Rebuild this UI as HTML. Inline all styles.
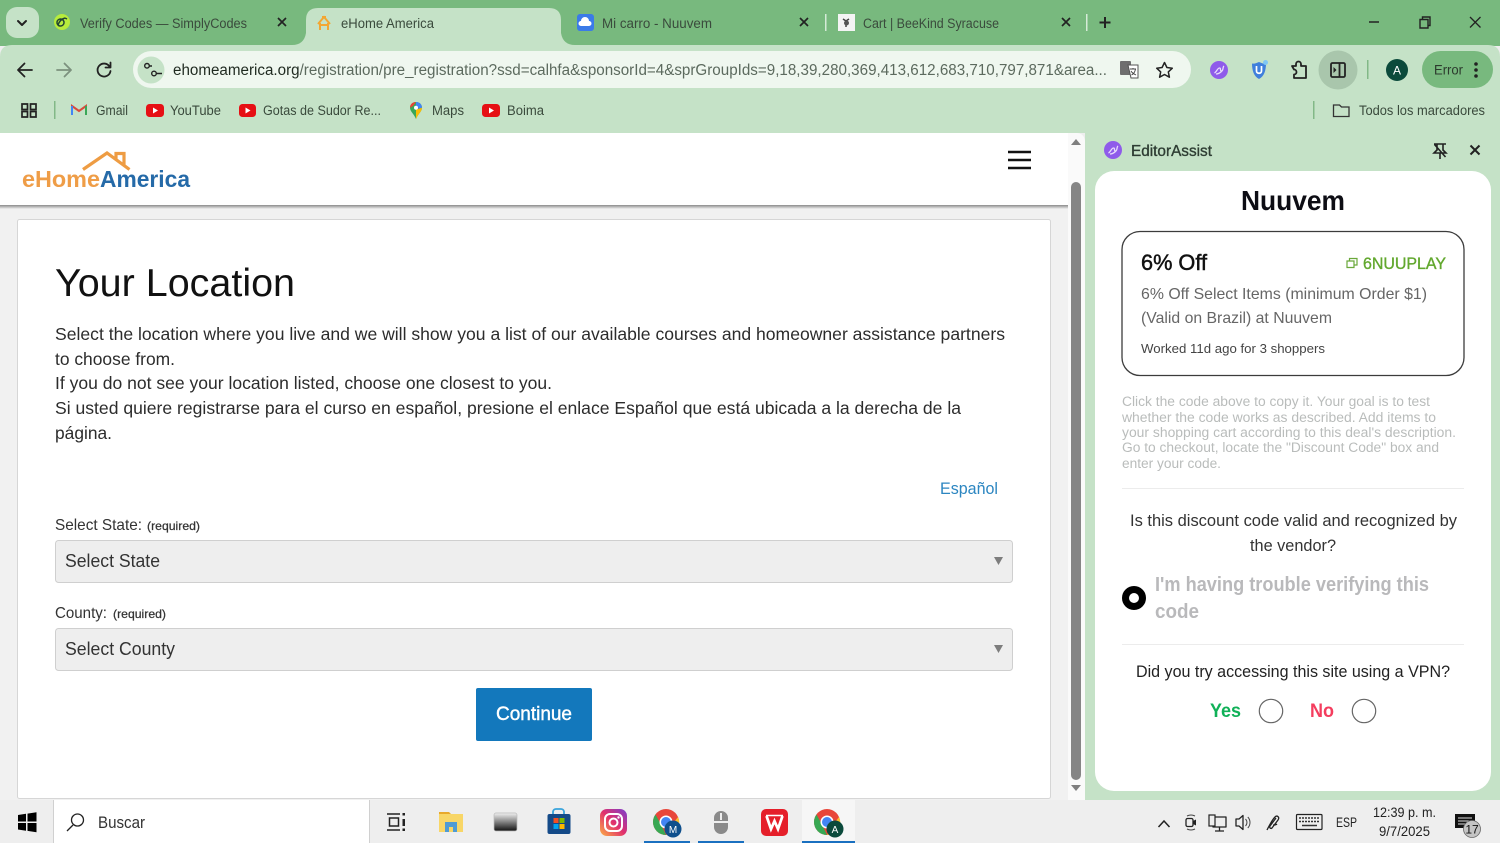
<!DOCTYPE html>
<html lang="es"><head><meta charset="utf-8"><title>eHome America</title>
<style>
html,body{margin:0;padding:0;width:1500px;height:843px;overflow:hidden;background:#eee}
svg{position:absolute;left:0;top:0;display:block}
text{font-family:"Liberation Sans",sans-serif;white-space:pre}
.c{font-size:13.5px;fill:#3a4a3c}
.p{font-size:17.6px;fill:#2c2c2c}
.h{font-size:13.4px;fill:#b9bcbb}
.i{fill:none;stroke:#222;stroke-width:1.8;stroke-linecap:round;stroke-linejoin:round}
.t{fill:none;stroke:#222;stroke-width:1.3;stroke-linejoin:round}
</style></head><body>
<svg width="1500" height="843" viewBox="0 0 1500 843" xmlns="http://www.w3.org/2000/svg">
<!-- chrome backgrounds -->
<rect width="1500" height="843" fill="#eeeeee"/>
<rect width="1500" height="46" fill="#78b97e"/>
<path d="M0 133V57Q0 45 12 45H1488Q1500 45 1500 57V133Z" fill="#c5e2c7"/>
<!-- tabs -->
<rect x="6" y="7" width="33" height="31" rx="11" fill="#c5e2c7"/>
<path d="M18 21l4 4 4-4" fill="none" stroke="#222" stroke-width="2" stroke-linecap="round" stroke-linejoin="round"/>
<circle cx="62" cy="22" r="8" fill="#b7ec3c"/>
<path d="M58 25c1-3 3-6 7-7M57 22a3.500 3.500 0 1 0 7 1 3.500 3.500 0 1 0-7-1M65 18l2 1" fill="none" stroke="#243" stroke-width="1.500"/>
<text class="c" x="80" y="28" textLength="167" lengthAdjust="spacingAndGlyphs">Verify Codes — SimplyCodes</text>
<path d="M278 18l8 8M286 18l-8 8M539 18l8 8M547 18l-8 8M800 18l8 8M808 18l-8 8M1062 18l8 8M1070 18l-8 8" fill="none" stroke="#222" stroke-width="1.700"/>
<path d="M292 45Q304 45 306 33V20Q306 8 318 8H549Q561 8 561 20V33Q563 45 575 45Z" fill="#c5e2c7"/>
<path d="M318 24l6-7 6 7M320 23v7M328 23v7M320 25h8M322 17h4" fill="none" stroke="#f3a732" stroke-width="2"/>
<text class="c" x="341" y="28" textLength="93" lengthAdjust="spacingAndGlyphs">eHome America</text>
<rect x="577" y="14" width="17" height="17" rx="3" fill="#3b7be8"/>
<path d="M581 26a2.500 2.500 0 0 1 0-5 4 4 0 0 1 8 0 2.500 2.500 0 0 1 0 5Z" fill="#fff"/>
<text class="c" x="602" y="28" textLength="110" lengthAdjust="spacingAndGlyphs">Mi carro - Nuuvem</text>
<rect x="825" y="14" width="1.500" height="17" fill="#d5ead7"/>
<rect x="838" y="14" width="17" height="17" fill="#f4f4f4"/>
<path d="M843 19l3 2 3-2M846 21v6" fill="none" stroke="#444" stroke-width="1.500"/><circle cx="846.500" cy="23" r="2.500" fill="#555"/>
<text class="c" x="863" y="28" textLength="136" lengthAdjust="spacingAndGlyphs">Cart | BeeKind Syracuse</text>
<rect x="1086" y="14" width="1.500" height="17" fill="#d5ead7"/>
<path d="M1105 17v11M1099.500 22.500h11" fill="none" stroke="#222" stroke-width="2"/>
<path d="M1369 22h10" stroke="#222" stroke-width="1.500"/>
<path d="M1420 19.500h8v8.500h-8zM1422.500 19.500v-2.500h7.500v8.500h-2" fill="none" stroke="#222" stroke-width="1.400"/>
<path d="M1470 17l10.500 10.500M1480.500 17l-10.500 10.500" stroke="#222" stroke-width="1.300"/>
<!-- toolbar -->
<path class="i" d="M32 70H18M24.500 63.500L18 70l6.500 6.500"/>
<path class="i" style="stroke:#7c917e" d="M57 70h14M64.500 63.500L71 70l-6.500 6.500"/>
<path class="i" d="M109.500 66.500A6.500 6.500 0 1 0 110.500 71M110.500 62.500v5h-5"/>
<rect x="133" y="51" width="1058" height="37" rx="18.500" fill="#eff7ef"/>
<circle cx="151" cy="70" r="13.500" fill="#c5e2c7"/>
<path d="M145 66h7M155 73.500h7" stroke="#222" stroke-width="1.500"/>
<circle cx="147" cy="65.800" r="2.300" fill="#c5e2c7" stroke="#222" stroke-width="1.400"/><circle cx="154" cy="73.500" r="2.300" fill="#c5e2c7" stroke="#222" stroke-width="1.400"/>
<text x="173" y="75" font-size="15.500" textLength="934" lengthAdjust="spacingAndGlyphs" fill="#5c6a5e"><tspan fill="#1f2a20">ehomeamerica.org</tspan>/registration/pre_registration?ssd=calhfa&amp;sponsorId=4&amp;sprGroupIds=9,18,39,280,369,413,612,683,710,797,871&amp;area...</text>
<rect x="1120" y="61" width="11" height="14" rx="1" fill="#6e6e6e"/>
<path d="M1128 65h10v13h-7z" fill="#fff" stroke="#555" stroke-width="1"/>
<path d="M1130 69h6M1133 68v1M1135.500 69c-.5 3-2 5-4 6M1131 71c1 2 3 3 5 4" fill="none" stroke="#444" stroke-width=".9"/>
<path d="M1164.500 62.500l2.400 5 5.400.7-4 3.700 1.100 5.300-4.900-2.700-4.900 2.700 1.100-5.300-4-3.700 5.400-.7z" fill="none" stroke="#222" stroke-width="1.500" stroke-linejoin="round"/>
<circle cx="1219" cy="70" r="9" fill="#8f5bea"/>
<path d="M1214.500 73c2-1 3-5 5-5s0 3 2 3 1-4 2.500-5M1216 74c2 0 4-1 6-3" fill="none" stroke="#e8dcfb" stroke-width="1.300"/>
<path d="M1252 63.500c3 .5 5-.7 7-1.500 2 .8 4 2 7 1.500 0 7-2 13-7 15.500-5-2.500-7-8.500-7-15.500Z" fill="#3f7fdc"/>
<path d="M1256.500 66v5c0 3 5 3 5 0v-5" fill="none" stroke="#fff" stroke-width="1.700"/>
<circle cx="1265.500" cy="62.500" r="2.500" fill="#7fc6f3"/>
<path class="i" d="M1292 66h4v-2a2.500 2.500 0 0 1 5 0v2h5v12h-12v-3.500a2.500 2.500 0 0 0 0-5z" style="stroke-width:1.800"/>
<circle cx="1338" cy="70" r="19.500" fill="#a9c6ac"/>
<rect x="1331" y="63" width="14" height="14" rx="1.500" fill="none" stroke="#222" stroke-width="1.800"/>
<path d="M1339.500 63v14" stroke="#222" stroke-width="1.800"/><path d="M1333.500 67l3 3-3 3z" fill="#222"/>
<rect x="1367" y="60" width="1.500" height="19" fill="#82b887"/>
<circle cx="1397" cy="70" r="11" fill="#0b4a3b"/>
<text x="1397" y="74.500" font-size="12" fill="#fff" text-anchor="middle">A</text>
<rect x="1422" y="51" width="71" height="37" rx="18.500" fill="#78b97e"/>
<text class="c" x="1434" y="74.500" textLength="29" lengthAdjust="spacingAndGlyphs" style="fill:#2c3a2d">Error</text>
<circle cx="1476" cy="64" r="1.800" fill="#222"/><circle cx="1476" cy="70" r="1.800" fill="#222"/><circle cx="1476" cy="76" r="1.800" fill="#222"/>
<!-- bookmarks -->
<path d="M22 104h5.500v5.500H22zM30.500 104H36v5.500h-5.500zM22 111.500h5.500V117H22zM30.500 111.500H36V117h-5.500z" fill="none" stroke="#222" stroke-width="1.700"/>
<rect x="54" y="101" width="1.500" height="18" fill="#82b887"/>
<path d="M72 115v-9l7 5 7-5v9" fill="none" stroke="#d94a3d" stroke-width="2"/>
<path d="M72 115v-9" stroke="#4285f4" stroke-width="2"/><path d="M86 115v-9" stroke="#3aa757" stroke-width="2"/>
<text class="c" x="96" y="115" textLength="32" lengthAdjust="spacingAndGlyphs">Gmail</text>
<rect x="146" y="104" width="18" height="13" rx="3.500" fill="#e60f14"/><path d="M153 107.500l5 3-5 3z" fill="#fff"/>
<text class="c" x="170" y="115" textLength="51" lengthAdjust="spacingAndGlyphs">YouTube</text>
<rect x="239" y="104" width="17" height="13" rx="3.500" fill="#e60f14"/><path d="M245.500 107.500l5 3-5 3z" fill="#fff"/>
<text class="c" x="263" y="115" textLength="118" lengthAdjust="spacingAndGlyphs">Gotas de Sudor Re...</text>
<path d="M416 102c-3.800 0-6 2.700-6 5.700 0 3.800 4 6 6 11.300 2-5.300 6-7.500 6-11.300 0-3-2.200-5.700-6-5.700z" fill="#3aa757"/>
<path d="M416 102c3.800 0 6 2.700 6 5.700l-6 1.500z" fill="#4285f4"/><path d="M410 107.700c0-3 2.200-5.700 6-5.700l-3 4z" fill="#ea4335"/><path d="M416 119c2-5.300 6-7.500 6-11.300l-6 2z" fill="#fbbc04"/><circle cx="416" cy="107.700" r="2" fill="#fff"/>
<text class="c" x="432" y="115" textLength="32" lengthAdjust="spacingAndGlyphs">Maps</text>
<rect x="482" y="104" width="18" height="13" rx="3.500" fill="#e60f14"/><path d="M489 107.500l5 3-5 3z" fill="#fff"/>
<text class="c" x="507" y="115" textLength="37" lengthAdjust="spacingAndGlyphs">Boima</text>
<rect x="1313" y="101" width="1.500" height="18" fill="#82b887"/>
<path d="M1333.500 105h6l2 2h7.500v9.500h-15.500z" fill="none" stroke="#333" stroke-width="1.300"/>
<text class="c" x="1359" y="115" textLength="126" lengthAdjust="spacingAndGlyphs">Todos los marcadores</text>

<!-- page -->
<path d="M0 133H1076Q1084 133 1085 141V800H0Z" fill="#f1f1f1"/>
<defs><linearGradient id="sh" x1="0" y1="0" x2="0" y2="1"><stop offset="0" stop-color="#8a8a8a"/><stop offset="1" stop-color="#f1f1f1"/></linearGradient></defs>
<rect x="0" y="205" width="1068" height="4" fill="url(#sh)"/>
<path d="M0 133H1068V205H0Z" fill="#fff"/>
<path d="M1068 133H1076Q1084 133 1085 141V800H1068Z" fill="#fafafa"/>
<path d="M1076 139l5 6h-10z" fill="#7f7f7f"/>
<rect x="1071" y="182" width="10" height="598" rx="5" fill="#858585"/>
<path d="M1071 785h10l-5 6z" fill="#7f7f7f"/>
<!-- logo -->
<path d="M83 169.500L107 153 129.500 169.500M116 160V153.500H124V166" fill="none" stroke="#ee9c43" stroke-width="3.200"/>
<text x="22" y="187" font-size="23" font-weight="700" textLength="78" lengthAdjust="spacingAndGlyphs" fill="#ef9d47">eHome</text>
<text x="100" y="187" font-size="23" font-weight="700" textLength="90" lengthAdjust="spacingAndGlyphs" fill="#256aa8">America</text>
<path d="M1008 152h23M1008 160h23M1008 168h23" stroke="#111" stroke-width="2.600"/>
<!-- main card -->
<rect x="17.500" y="219.500" width="1033" height="579" rx="2" fill="#fff" stroke="#d6d6d6"/>
<text x="55" y="296" font-size="38.500" textLength="240" lengthAdjust="spacingAndGlyphs" fill="#111">Your Location</text>
<text class="p" x="55" y="340" textLength="950" lengthAdjust="spacingAndGlyphs">Select the location where you live and we will show you a list of our available courses and homeowner assistance partners</text>
<text class="p" x="55" y="365" textLength="120" lengthAdjust="spacingAndGlyphs">to choose from.</text>
<text class="p" x="55" y="389" textLength="497" lengthAdjust="spacingAndGlyphs">If you do not see your location listed, choose one closest to you.</text>
<text class="p" x="55" y="414" textLength="906" lengthAdjust="spacingAndGlyphs">Si usted quiere registrarse para el curso en español, presione el enlace Español que está ubicada a la derecha de la</text>
<text class="p" x="55" y="439" textLength="57" lengthAdjust="spacingAndGlyphs">página.</text>
<text x="940" y="494" font-size="16.500" textLength="58" lengthAdjust="spacingAndGlyphs" fill="#2c86c1">Español</text>
<text x="55" y="530" font-size="16" textLength="87" lengthAdjust="spacingAndGlyphs" fill="#333">Select State:</text>
<text x="147" y="530" font-size="12" textLength="53" lengthAdjust="spacingAndGlyphs" fill="#333" stroke="#333" stroke-width=".25">(required)</text>
<rect x="55.500" y="540.500" width="957" height="42" rx="3" fill="#eeeeee" stroke="#cfcfcf"/>
<text x="65" y="567" font-size="18.500" textLength="95" lengthAdjust="spacingAndGlyphs" fill="#333">Select State</text>
<path d="M994 557h9l-4.500 8z" fill="#7d7d7d"/>
<text x="55" y="618" font-size="16" textLength="52" lengthAdjust="spacingAndGlyphs" fill="#333">County:</text>
<text x="113" y="618" font-size="12" textLength="53" lengthAdjust="spacingAndGlyphs" fill="#333" stroke="#333" stroke-width=".25">(required)</text>
<rect x="55.500" y="628.500" width="957" height="42" rx="3" fill="#eeeeee" stroke="#cfcfcf"/>
<text x="65" y="655" font-size="18.500" textLength="110" lengthAdjust="spacingAndGlyphs" fill="#333">Select County</text>
<path d="M994 645h9l-4.500 8z" fill="#7d7d7d"/>
<rect x="476" y="688" width="116" height="53" rx="2" fill="#1378bc"/>
<text x="496" y="720" font-size="19" textLength="76" lengthAdjust="spacingAndGlyphs" fill="#fff" stroke="#fff" stroke-width=".4">Continue</text>

<!-- side panel -->
<rect x="1085" y="133" width="415" height="667" fill="#c5e2c7"/>
<circle cx="1113" cy="150" r="9" fill="#8f5bea"/>
<path d="M1108.500 153c2-1 3-5 5-5s0 3 2 3 1-4 2.500-5M1110 154c2 0 4-1 6-3" fill="none" stroke="#e8dcfb" stroke-width="1.300"/>
<text x="1131" y="156" font-size="15.500" textLength="81" lengthAdjust="spacingAndGlyphs" fill="#2e3d33" stroke="#2e3d33" stroke-width=".35">EditorAssist</text>
<path d="M1434 144h12M1437 144v6l-3 3h12l-3-3v-6M1440 153v6M1434.500 144.500l11 12.500" fill="none" stroke="#222" stroke-width="1.600"/>
<path d="M1470.500 145.500l9 9M1479.500 145.500l-9 9" stroke="#222" stroke-width="2"/>
<rect x="1095" y="171" width="396" height="620" rx="19" fill="#fff"/>
<text x="1293" y="210" font-size="28" font-weight="700" text-anchor="middle" textLength="104" lengthAdjust="spacingAndGlyphs" fill="#0d0d14">Nuuvem</text>
<rect x="1122" y="231.500" width="342" height="144" rx="18" fill="#fff" stroke="#3c3c3c" stroke-width="1.300"/>
<text x="1141" y="270" font-size="22" textLength="66" lengthAdjust="spacingAndGlyphs" fill="#111" stroke="#111" stroke-width=".5">6% Off</text>
<path d="M1347 261h7v6.500h-7zM1349.500 261v-2.500h7.500v6.500h-3" fill="none" stroke="#6aa83a" stroke-width="1.200"/>
<text x="1363" y="269" font-size="16.500" textLength="83" lengthAdjust="spacingAndGlyphs" fill="#62a82e" stroke="#62a82e" stroke-width=".35">6NUUPLAY</text>
<text x="1141" y="299" font-size="16" textLength="286" lengthAdjust="spacingAndGlyphs" fill="#666">6% Off Select Items (minimum Order $1)</text>
<text x="1141" y="323" font-size="16" textLength="191" lengthAdjust="spacingAndGlyphs" fill="#666">(Valid on Brazil) at Nuuvem</text>
<text x="1141" y="353" font-size="13" textLength="184" lengthAdjust="spacingAndGlyphs" fill="#444">Worked 11d ago for 3 shoppers</text>
<text class="h" x="1122" y="406" textLength="308" lengthAdjust="spacingAndGlyphs">Click the code above to copy it. Your goal is to test</text>
<text class="h" x="1122" y="422" textLength="314" lengthAdjust="spacingAndGlyphs">whether the code works as described. Add items to</text>
<text class="h" x="1122" y="437" textLength="334" lengthAdjust="spacingAndGlyphs">your shopping cart according to this deal's description.</text>
<text class="h" x="1122" y="452" textLength="317" lengthAdjust="spacingAndGlyphs">Go to checkout, locate the "Discount Code" box and</text>
<text class="h" x="1122" y="468" textLength="99" lengthAdjust="spacingAndGlyphs">enter your code.</text>
<rect x="1122" y="488" width="342" height="1" fill="#ececec"/>
<text x="1130" y="526" font-size="16.200" textLength="327" lengthAdjust="spacingAndGlyphs" fill="#333">Is this discount code valid and recognized by</text>
<text x="1250" y="551" font-size="16.200" textLength="86" lengthAdjust="spacingAndGlyphs" fill="#333">the vendor?</text>
<circle cx="1134" cy="598" r="8.500" fill="#fff" stroke="#000" stroke-width="7"/>
<text x="1155" y="591" font-size="20" font-weight="700" textLength="274" lengthAdjust="spacingAndGlyphs" fill="#b9b9bb">I'm having trouble verifying this</text>
<text x="1155" y="618" font-size="20" font-weight="700" textLength="44" lengthAdjust="spacingAndGlyphs" fill="#b9b9bb">code</text>
<rect x="1122" y="644" width="342" height="1" fill="#ececec"/>
<text x="1136" y="677" font-size="16.200" textLength="314" lengthAdjust="spacingAndGlyphs" fill="#222">Did you try accessing this site using a VPN?</text>
<text x="1210" y="717" font-size="19" font-weight="700" textLength="31" lengthAdjust="spacingAndGlyphs" fill="#10b158">Yes</text>
<circle cx="1271" cy="711" r="11.700" fill="#fff" stroke="#666" stroke-width="1.200"/>
<text x="1310" y="717" font-size="19" font-weight="700" textLength="24" lengthAdjust="spacingAndGlyphs" fill="#f43d5e">No</text>
<circle cx="1364" cy="711" r="11.700" fill="#fff" stroke="#666" stroke-width="1.200"/>

<!-- taskbar -->
<rect x="0" y="800" width="1500" height="43" fill="#eeeeee"/>
<path d="M18 815l8-1.200v7.700h-8zM27.500 813.600l9-1.300v9.200h-9zM18 823h8v7.700l-8-1.200zM27.500 823h9v9.200l-9-1.300z" fill="#000"/>
<rect x="54" y="800" width="315" height="43" fill="#fff"/><rect x="369" y="800" width="1" height="43" fill="#d0d0d0"/><rect x="53" y="800" width="1" height="43" fill="#d0d0d0"/>
<circle cx="77.500" cy="820" r="6" fill="none" stroke="#222" stroke-width="1.300"/><path d="M73 825l-6 6" stroke="#222" stroke-width="1.300"/>
<text x="98" y="828" font-size="16.500" textLength="47" lengthAdjust="spacingAndGlyphs" fill="#333">Buscar</text>
<path d="M387 814h13M389.500 818h9v8h-9zM387 830h13" fill="none" stroke="#222" stroke-width="1.500"/>
<rect x="402.500" y="813" width="2.500" height="2.500" fill="#222"/><rect x="402.500" y="819" width="2.500" height="7" fill="#222"/><rect x="402.500" y="828.500" width="2.500" height="2.500" fill="#222"/>
<path d="M439 812h10l3 3h-13z" fill="#e8a92c"/><rect x="439" y="814" width="24" height="18" fill="#f8d667"/>
<rect x="445" y="822" width="12" height="10" fill="#4f9bd4"/><rect x="449" y="827" width="4" height="5" fill="#f8d667"/>
<defs><linearGradient id="bk" x1="0" y1="0" x2="0" y2="1"><stop offset="0" stop-color="#f2f2f2"/><stop offset="1" stop-color="#111"/></linearGradient>
<linearGradient id="ig" x1="0" y1="1" x2="1" y2="0"><stop offset="0" stop-color="#fcb045"/><stop offset=".5" stop-color="#e1306c"/><stop offset="1" stop-color="#7a3fd0"/></linearGradient></defs>
<rect x="494" y="813" width="23" height="18" rx="2" fill="url(#bk)" stroke="#bbb" stroke-width=".7"/>
<path d="M553 814v-2.500a3 3 0 0 1 3-2.500h5a3 3 0 0 1 3 2.500v2.500" fill="none" stroke="#38a4dc" stroke-width="1.800"/>
<rect x="547.500" y="814" width="23" height="20" rx="2" fill="#144a88"/>
<rect x="553.500" y="818" width="5" height="5" fill="#f25022"/><rect x="559.500" y="818" width="5" height="5" fill="#7fba00"/><rect x="553.500" y="824" width="5" height="5" fill="#00a4ef"/><rect x="559.500" y="824" width="5" height="5" fill="#ffb900"/>
<rect x="600" y="809" width="27" height="27" rx="7" fill="url(#ig)"/>
<rect x="605" y="814" width="17" height="17" rx="5" fill="none" stroke="#fff" stroke-width="2"/><circle cx="613.500" cy="822.500" r="4" fill="none" stroke="#fff" stroke-width="2"/><circle cx="618.500" cy="817.500" r="1.200" fill="#fff"/>
<!-- chrome 1 -->
<circle cx="666" cy="822" r="13" fill="#e8463a"/><path d="M666 835a13 13 0 0 1-13-13c0-3 1-5.500 2.500-7.500l6 11z" fill="#38a853"/><path d="M678 817a13 13 0 0 1-4 16l-8 2 6-10z" fill="#fbc02d"/><circle cx="666" cy="822" r="6.500" fill="#fff"/><circle cx="666" cy="822" r="5" fill="#4285f4"/>
<circle cx="673" cy="829" r="8.500" fill="#0f4f8c"/><text x="673" y="833" font-size="10" fill="#fff" text-anchor="middle">M</text>
<path d="M714 821v-3a7 7 0 0 1 14 0v3zM714 823h14v4a7 7 0 0 1-14 0z" fill="#8a8a8a"/><rect x="720" y="813" width="2" height="7" fill="#eee"/>
<rect x="761" y="809" width="27" height="27" rx="5" fill="#e51f2a"/>
<path d="M766.500 816l4.500 13 3.500-8 3.500 8 4.500-13" fill="none" stroke="#fff" stroke-width="2.700"/><path d="M766 815.500h17" stroke="#fff" stroke-width="1.500"/>
<rect x="802" y="800" width="53" height="41" fill="#f6f6f6"/>
<circle cx="827" cy="822" r="13" fill="#e8463a"/><path d="M827 835a13 13 0 0 1-13-13c0-3 1-5.500 2.500-7.500l6 11z" fill="#38a853"/><path d="M839 817a13 13 0 0 1-4 16l-8 2 6-10z" fill="#fbc02d"/><circle cx="827" cy="822" r="6.500" fill="#fff"/><circle cx="827" cy="822" r="5" fill="#4285f4"/>
<circle cx="835" cy="829" r="8.500" fill="#0b4a3b"/><text x="835" y="833" font-size="10" fill="#fff" text-anchor="middle">A</text>
<rect x="644" y="841" width="46" height="2" fill="#1a70c0"/><rect x="698" y="841" width="46" height="2" fill="#1a70c0"/><rect x="802" y="841" width="53" height="2" fill="#1a70c0"/>
<!-- tray -->
<path d="M1158.500 827l5.500-6 5.500 6" fill="none" stroke="#222" stroke-width="1.500"/>
<path d="M1187 816q4-2 8 0M1187 829q4 2 8 0" fill="none" stroke="#444" stroke-width="1.100"/><rect x="1186" y="818.500" width="7" height="8" rx="1.500" fill="none" stroke="#222" stroke-width="1.300"/><path d="M1193 821l3-1.500v6l-3-1.500z" fill="#222"/>
<path class="t" d="M1213 817h13v10h-13zM1219.500 827v4M1215 831h9"/><rect x="1209" y="815" width="6" height="11" fill="#eee" stroke="#222" stroke-width="1.200"/>
<path class="t" d="M1236 819h3l4-3.500v14l-4-3.500h-3z"/><path d="M1245.500 819a5 5 0 0 1 0 7M1247.800 817a8 8 0 0 1 0 11" fill="none" stroke="#444" stroke-width="1"/>
<path d="M1267 830c2-4 5-10 8-13 2-2 5 0 3 3l-6 8c-1 1-3 0-2-2l6-8M1273 825c2 0 3 0 4-1" fill="none" stroke="#222" stroke-width="1.300"/>
<rect x="1296.500" y="814.500" width="25.500" height="15" rx="1" fill="none" stroke="#222" stroke-width="1.200"/>
<path d="M1299 818h21M1299 821.500h21" stroke="#333" stroke-width="1.400" stroke-dasharray="2 1"/><path d="M1302 825.500h15" stroke="#333" stroke-width="1.500"/>
<text x="1336" y="827" font-size="13.500" textLength="21" lengthAdjust="spacingAndGlyphs" fill="#222">ESP</text>
<text x="1373" y="817" font-size="14" textLength="63" lengthAdjust="spacingAndGlyphs" fill="#222">12:39 p. m.</text>
<text x="1379" y="836" font-size="14" textLength="51" lengthAdjust="spacingAndGlyphs" fill="#222">9/7/2025</text>
<path d="M1455 814h20v14h-13l-7 0z" fill="#111"/><path d="M1458 818h14M1458 821h14M1458 824h9" stroke="#ddd" stroke-width="1"/>
<circle cx="1472" cy="829" r="8.500" fill="#c4c4c4" stroke="#666" stroke-width=".8"/>
<text x="1472" y="833.500" font-size="12" fill="#111" text-anchor="middle">17</text>
</svg>
</body></html>
